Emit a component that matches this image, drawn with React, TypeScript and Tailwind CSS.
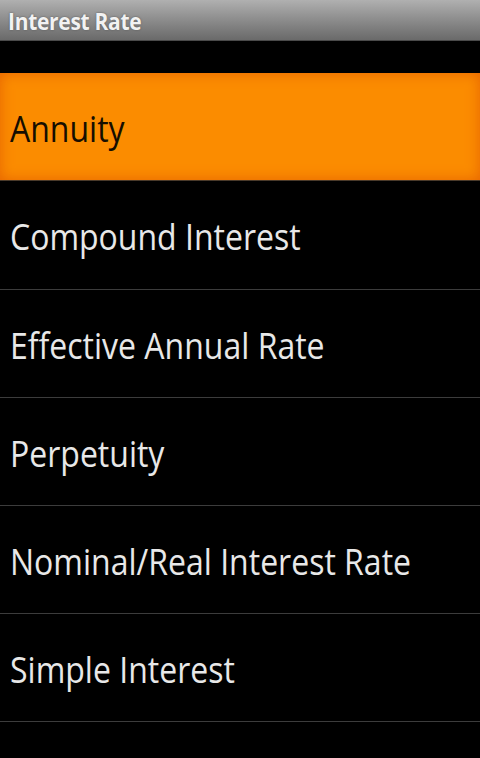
const ITEMS = [
  "Compound Interest",
  "Effective Annual Rate",
  "Perpetuity",
  "Nominal/Real Interest Rate",
  "Simple Interest",
];

export default function App() {
  return (
    <div className="flex h-[758px] w-[480px] flex-col overflow-hidden bg-black font-['Open_Sans',sans-serif]">
      <div className="flex h-[41px] shrink-0 items-center border-b border-[#4a4a4a] bg-gradient-to-b from-[#b0b0b0] via-[#8c8c8c] to-[#6a6a6a] px-2">
        <span className="inline-block translate-y-[1px] scale-y-[1.1] text-[21px] font-bold leading-none tracking-[-0.3px] text-[#f2f2f2] [text-shadow:0_0_2px_#555]">
          Interest Rate
        </span>
      </div>
      <div className="h-[32px] shrink-0" />
      <div className="flex flex-col">
        <div className="flex h-[108px] items-center border-b border-[#4a3a2a] bg-[#fb8c00] px-[10px] shadow-[inset_0_0_14px_#e66400]">
          <span className="inline-block translate-y-[1px] scale-y-[1.15] text-[32px] leading-none text-[#160e00]">
            Annuity
          </span>
        </div>
        {ITEMS.map((label, i) => (
          <div
            key={label}
            className={`flex items-center border-b border-[#3c3c3c] px-[10px] ${i === 0 ? "h-[109px]" : "h-[108px]"}`}
          >
            <span className="inline-block translate-y-[1px] scale-y-[1.15] text-[32px] leading-none text-[#e8e8e8]">
              {label}
            </span>
          </div>
        ))}
      </div>
    </div>
  );
}
